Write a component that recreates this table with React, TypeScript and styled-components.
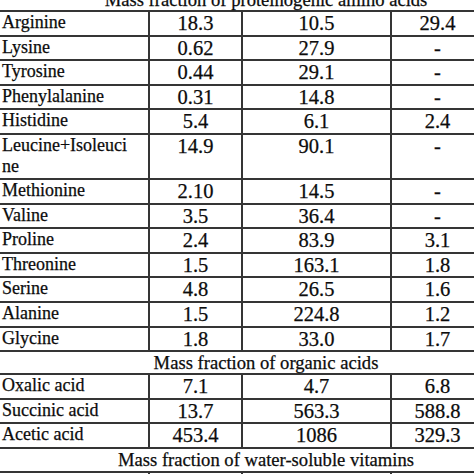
import styled, { createGlobalStyle } from 'styled-components';

// Global style
const GlobalStyle = createGlobalStyle`
  html, body {
    margin: 0;
    padding: 0;
    background: #ffffff;
    overflow: hidden;
  }
  body {
    color: #0c0c0c;
    font-family: "Liberation Serif", "Times New Roman", serif;
    font-size: 18px;
    -webkit-text-stroke: 0.25px #0c0c0c;
  }
`;

// Styled element (Table)
const StyledTable = styled.div`
  display: flex;
  flex-direction: column;
  margin-top: -11px;
  width: 483px;
`;
// Styled element (Row)
const StyledRow = styled.div<{ $height: number }>`
  border-bottom: 2px solid #353535;
  box-sizing: border-box;
  display: grid;
  grid-template-columns: 150px 93px 149px 91px;
  height: ${({ $height }) => $height}px;
  line-height: 21px;
`;
// Styled element (Section header row)
const StyledSectionRow = styled.div<{ $height: number }>`
  border-bottom: 2px solid #353535;
  box-sizing: border-box;
  font-size: 18.6px;
  height: ${({ $height }) => $height}px;
  line-height: 21px;
  padding-left: 49px;
  text-align: center;
  white-space: nowrap;
`;
// Styled element (Name cell)
const StyledNameCell = styled.div`
  border-right: 2px solid #353535;
  padding-left: 2px;
`;
// Styled element (Value cell)
const StyledValueCell = styled.div<{ $last?: boolean }>`
  border-right: ${({ $last }) => ($last ? 'none' : '2px solid #353535')};
  font-size: 20.5px;
  padding-top: 1px;
  text-align: center;
`;

/** Interface */
interface RowData {
  name: React.ReactNode;
  values: [string, string, string];
  height?: number;
}
interface Section {
  title: string;
  height: number;
  rows: RowData[];
}

const ROW = 24.6;

const sections: Section[] = [
  {
    title: 'Mass fraction of proteinogenic amino acids',
    height: 23,
    rows: [
      { name: 'Arginine', values: ['18.3', '10.5', '29.4'] },
      { name: 'Lysine', values: ['0.62', '27.9', '-'] },
      { name: 'Tyrosine', values: ['0.44', '29.1', '-'] },
      { name: 'Phenylalanine', values: ['0.31', '14.8', '-'] },
      { name: 'Histidine', values: ['5.4', '6.1', '2.4'] },
      { name: <>Leucine+Isoleuci<br />ne</>, values: ['14.9', '90.1', '-'], height: 45 },
      { name: 'Methionine', values: ['2.10', '14.5', '-'] },
      { name: 'Valine', values: ['3.5', '36.4', '-'] },
      { name: 'Proline', values: ['2.4', '83.9', '3.1'] },
      { name: 'Threonine', values: ['1.5', '163.1', '1.8'] },
      { name: 'Serine', values: ['4.8', '26.5', '1.6'] },
      { name: 'Alanine', values: ['1.5', '224.8', '1.2'] },
      { name: 'Glycine', values: ['1.8', '33.0', '1.7'] },
    ],
  },
  {
    title: 'Mass fraction of organic acids',
    height: 22.8,
    rows: [
      { name: 'Oxalic acid', values: ['7.1', '4.7', '6.8'] },
      { name: 'Succinic acid', values: ['13.7', '563.3', '588.8'] },
      { name: 'Acetic acid', values: ['453.4', '1086', '329.3'] },
    ],
  },
  {
    title: 'Mass fraction of water-soluble vitamins',
    height: 23.8,
    rows: [
      { name: '', values: ['', '', ''] },
    ],
  },
];

// Component (table row)
const TableRow = ({ name, values, height }: RowData): JSX.Element => {
  return (
    <StyledRow $height={height ?? ROW}>
      <StyledNameCell>{name}</StyledNameCell>
      {values.map((value: string, index: number): JSX.Element => (
        <StyledValueCell key={index} $last={index === values.length - 1}>{value}</StyledValueCell>
      ))}
    </StyledRow>
  );
};

// Component (app)
export default function App(): JSX.Element {
  return (
    <>
      <GlobalStyle />
      <StyledTable>
        {sections.map((section: Section, sIndex: number): JSX.Element => (
          <div key={sIndex}>
            <StyledSectionRow $height={section.height}>{section.title}</StyledSectionRow>
            {section.rows.map((row: RowData, rIndex: number): JSX.Element => (
              <TableRow key={rIndex} {...row} />
            ))}
          </div>
        ))}
      </StyledTable>
    </>
  );
}
